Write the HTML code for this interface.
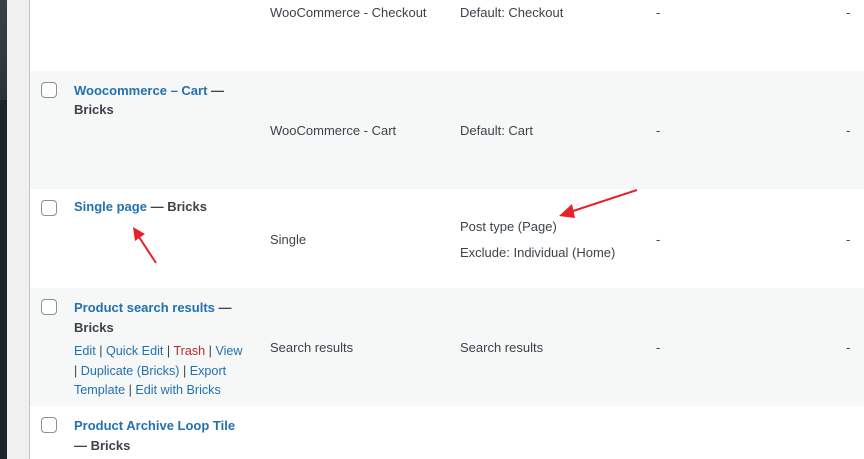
<!DOCTYPE html><html><head><style>
body{margin:0;width:864px;height:459px;overflow:hidden;background:#f0f0f1;font-family:"Liberation Sans",sans-serif;font-size:13px;color:#3c434a;position:relative}
.sb{position:absolute;left:0;top:0;width:7px;height:459px;background:#1d2327}
.sb2{position:absolute;left:0;top:0;width:7px;height:100px;background:linear-gradient(#3a4047,#2c3338)}
.tb{position:absolute;left:29px;top:0;width:835px;height:459px;border-left:1px solid #c3c4c7;background:#fff}
.r{position:absolute;left:30px;width:834px}
.g{background:#f6f7f7}
.t{position:absolute;white-space:nowrap}
.cb{position:absolute;left:41px;width:14px;height:14px;border:1px solid #8c8f94;border-radius:4px;background:#fff}
a{color:#2271b1;text-decoration:none}
b{font-weight:600}
</style></head><body>
<div class="sb"></div><div class="sb2"></div>
<div class="tb"></div>
<div class="r" style="top:0;height:71px"></div>
<div class="r g" style="top:71px;height:118px"></div>
<div class="r g" style="top:288px;height:118px"></div>

<div class="t" style="left:270px;top:5px">WooCommerce - Checkout</div>
<div class="t" style="left:460px;top:5px">Default: Checkout</div>
<div class="t" style="left:656px;top:5px">-</div>
<div class="t" style="left:846px;top:5px">-</div>

<div class="cb" style="top:82px"></div>
<div class="t" style="left:74px;top:81px;line-height:19px"><a><b>Woocommerce – Cart</b></a> <b>—</b><br><b>Bricks</b></div>
<div class="t" style="left:270px;top:123px">WooCommerce - Cart</div>
<div class="t" style="left:460px;top:123px">Default: Cart</div>
<div class="t" style="left:656px;top:123px">-</div>
<div class="t" style="left:846px;top:123px">-</div>

<div class="cb" style="top:200px"></div>
<div class="t" style="left:74px;top:199px"><a><b>Single page</b></a> <b>— Bricks</b></div>
<div class="t" style="left:270px;top:232px">Single</div>
<div class="t" style="left:460px;top:214px;line-height:26px">Post type (Page)<br>Exclude: Individual (Home)</div>
<div class="t" style="left:656px;top:232px">-</div>
<div class="t" style="left:846px;top:232px">-</div>

<div class="cb" style="top:299px"></div>
<div class="t" style="left:74px;top:298px;line-height:20px"><a><b>Product search results</b></a> <b>—</b><br><b>Bricks</b></div>
<div class="t" style="left:74px;top:342px;line-height:19.5px;font-size:12.6px"><a>Edit</a> | <a>Quick Edit</a> | <a style="color:#b32d2e">Trash</a> | <a>View</a><br>| <a>Duplicate (Bricks)</a> | <a>Export</a><br><a>Template</a> | <a>Edit with Bricks</a></div>
<div class="t" style="left:270px;top:340px">Search results</div>
<div class="t" style="left:460px;top:340px">Search results</div>
<div class="t" style="left:656px;top:340px">-</div>
<div class="t" style="left:846px;top:340px">-</div>

<div class="cb" style="top:417px"></div>
<div class="t" style="left:74px;top:416px;line-height:20px"><a><b>Product Archive Loop Tile</b></a><br><b>— Bricks</b></div>

<svg style="position:absolute;left:0;top:0" width="864" height="459">
<g stroke="#e8202a" stroke-width="2" fill="#e8202a">
<line x1="637" y1="190" x2="570" y2="212"/>
<polygon points="559,216 572,204 575,218" stroke="none"/>
<line x1="156" y1="263" x2="139" y2="237"/>
<polygon points="133,227 145,234 135,241" stroke="none"/>
</g></svg>
</body></html>
